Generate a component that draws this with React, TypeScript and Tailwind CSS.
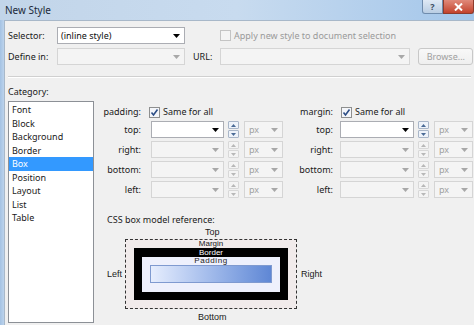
import React from 'react'

const categories = ['Font', 'Block', 'Background', 'Border', 'Box', 'Position', 'Layout', 'List', 'Table']
const sides = ['top', 'right', 'bottom', 'left']

function Arrow({ enabled }: { enabled: boolean }) {
  return (
    <svg width="7" height="4" viewBox="0 0 7 4" className="shrink-0">
      <path d="M0 0 L7 0 L3.5 4 Z" fill={enabled ? '#000' : '#a8a8a8'} />
    </svg>
  )
}

function Combo({ w, enabled, text }: { w: string; enabled: boolean; text?: string }) {
  return (
    <div
      className={`flex h-[17px] ${w} items-center justify-between border pl-[3px] pr-[4px] ${
        enabled ? 'border-[#abadb3] bg-white' : 'border-[#d5d5d5] bg-[#f4f4f4]'
      }`}
    >
      <span className="text-[#111]">{text}</span>
      <Arrow enabled={enabled} />
    </div>
  )
}

function Spinner({ enabled }: { enabled: boolean }) {
  const c = enabled ? 'border-[#a9b6c8] bg-[#eef3fa]' : 'border-[#d8d8d8] bg-[#f4f4f4]'
  const f = enabled ? '#4a6a96' : '#b8b8b8'
  return (
    <div className="flex h-[17px] w-[11px] flex-col gap-px">
      <div className={`flex flex-1 items-center justify-center rounded-[1px] border ${c}`}>
        <svg width="5" height="3" viewBox="0 0 5 3">
          <path d="M0 3 L5 3 L2.5 0 Z" fill={f} />
        </svg>
      </div>
      <div className={`flex flex-1 items-center justify-center rounded-[1px] border ${c}`}>
        <svg width="5" height="3" viewBox="0 0 5 3">
          <path d="M0 0 L5 0 L2.5 3 Z" fill={f} />
        </svg>
      </div>
    </div>
  )
}

function Units() {
  return (
    <div className="flex h-[17px] w-[39px] items-center justify-between border border-[#d5d5d5] bg-[#f4f4f4] pl-[4px] pr-[4px]">
      <span className="text-[#a0a0a0]">px</span>
      <Arrow enabled={false} />
    </div>
  )
}

function Check({ checked, disabled }: { checked?: boolean; disabled?: boolean }) {
  return (
    <div
      className={`flex h-[11px] w-[11px] items-center justify-center border ${
        disabled ? 'border-[#c4c4c4] bg-[#f4f4f4]' : 'border-[#8e8f8f] bg-[#f4f6fa]'
      }`}
    >
      {checked && (
        <svg width="9" height="9" viewBox="0 0 9 9">
          <path d="M1.5 4.5 L3.5 7 L7.5 1.5" stroke="#2d4e86" strokeWidth="1.6" fill="none" />
        </svg>
      )}
    </div>
  )
}

function Group({ label, labelW, comboMl }: { label: string; labelW: string; comboMl: string }) {
  return (
    <div className="flex flex-col">
      <div className="flex h-[12px] items-center">
        <span className={`${labelW} text-right`}>{label}</span>
        <div className="ml-[8px]">
          <Check checked />
        </div>
        <span className="ml-[3px]">Same for all</span>
      </div>
      <div className="mt-[3px] flex flex-col gap-[3px]">
        {sides.map((s, i) => (
          <div key={s} className="flex h-[17px] items-center">
            <span className={`${labelW} text-right`}>{s}:</span>
            <div className={comboMl}>
              <Combo w={label === 'padding:' ? 'w-[73px]' : 'w-[74px]'} enabled={i === 0} />
            </div>
            <div className="ml-[4px]">
              <Spinner enabled={i === 0} />
            </div>
            <div className="ml-[5px]">
              <Units />
            </div>
          </div>
        ))}
      </div>
    </div>
  )
}

function BoxModel() {
  return (
    <div className="flex flex-col font-['Liberation_Sans',Arial,sans-serif] text-[9px] leading-[9px] text-[#1a1a1a]">
      <div className="ml-[98px] h-[9px]">Top</div>
      <div className="mt-[2px] flex items-center">
        <span className="w-[18px]">Left</span>
        <div className="flex h-[70px] w-[172px] flex-col items-stretch border border-dashed border-[#333] bg-[#f1ebeb] px-[8px] pb-[8px] text-[8px] leading-[8px]">
          <div className="h-[8px] overflow-visible text-center">Margin</div>
          <div className="flex flex-1 flex-col bg-black px-[8px] pb-[8px]">
            <div className="h-[9px] pt-px text-center text-white">Border</div>
            <div className="flex flex-1 flex-col bg-[#eef0fc] px-[8px] pb-[9px]">
              <div className="h-[8px] text-center tracking-[0.6px]">Padding</div>
              <div className="flex-1 border border-[#7f9ad0] bg-gradient-to-r from-[#e6edfd] to-[#5f87d5]" />
            </div>
          </div>
        </div>
        <span className="ml-[4px]">Right</span>
      </div>
      <div className="ml-[91px] mt-[4px] h-[9px]">Bottom</div>
    </div>
  )
}

export default function App() {
  return (
    <div className="flex h-[325px] w-[474px] flex-col overflow-hidden font-['Noto_Sans',sans-serif] text-[9px] leading-[12px] text-[#1a1a1a]">
      {/* title bar */}
      <div className="flex h-[20px] shrink-0 items-start bg-gradient-to-r from-[#c2d5e9] via-[#c8dbef] to-[#a3c6ea]">
        <span className="ml-[5px] mt-[4px] text-[10px] leading-[13px] text-[#1c2a3a]">New Style</span>
        <div className="ml-auto flex">
          <div className="flex h-[14px] w-[21px] items-center justify-center rounded-bl-[3px] border border-t-0 border-[#6f8cad] bg-gradient-to-b from-[#dfe9f5] to-[#b9cde3] text-[9px] leading-[9px] font-bold text-[#3d4e63]">
            ?
          </div>
          <div className="flex h-[14px] w-[31px] items-center justify-center rounded-br-[3px] border border-t-0 border-[#8e3b2d] bg-gradient-to-b from-[#e0897a] to-[#c2412b]">
            <svg width="9" height="8" viewBox="0 0 9 8">
              <path d="M1 0.5 L8 7.5 M8 0.5 L1 7.5" stroke="#fff" strokeWidth="2" />
            </svg>
          </div>
        </div>
      </div>

      <div className="flex flex-1">
        <div className="w-[4px] bg-gradient-to-r from-[#a4c2e3] to-[#bcd3ec]" />
        <div className="flex flex-1 flex-col border-t border-l border-[#a8b8c9] bg-[#f0f0f0]">
          {/* selector row */}
          <div className="mt-[6px] flex items-center">
            <span className="w-[52px] pl-[3px]">Selector:</span>
            <Combo w="w-[128px]" enabled text="(inline style)" />
            <div className="ml-[35px]">
              <Check disabled />
            </div>
            <span className="ml-[3px] text-[#9a9a9a]">Apply new style to document selection</span>
          </div>
          {/* define in row */}
          <div className="mt-[4px] flex items-center">
            <span className="w-[52px] pl-[3px]">Define in:</span>
            <Combo w="w-[128px]" enabled={false} />
            <span className="ml-[8px]">URL:</span>
            <div className="ml-[8px]">
              <Combo w="w-[190px]" enabled={false} />
            </div>
            <div className="ml-[8px] flex h-[17px] w-[55px] items-center justify-center rounded-[3px] border border-[#c8c8c8] bg-gradient-to-b from-[#f8f8f8] to-[#efefef] text-[#a0a0a0]">
              Browse...
            </div>
          </div>
          {/* separator */}
          <div className="mx-[3px] mt-[11px] h-px bg-[#d0d0d0]" />
          <div className="mx-[3px] h-px bg-white" />

          <div className="flex flex-1">
            {/* category */}
            <div className="mb-[2px] ml-[3px] flex w-[86px] flex-col">
              <span className="mt-[8px]">Category:</span>
              <div className="mt-[3px] flex-1 border border-[#8c9096] bg-white pt-px">
                {categories.map((c) => (
                  <div
                    key={c}
                    className={`h-[13.5px] pl-[3px] leading-[13px] ${c === 'Box' ? 'bg-[#3399ff] text-white' : ''}`}
                  >
                    {c}
                  </div>
                ))}
              </div>
            </div>

            {/* right */}
            <div className="flex flex-col">
              <div className="mt-[28px] flex">
                <Group label="padding:" labelW="w-[47px]" comboMl="ml-[10px]" />
                <Group label="margin:" labelW="w-[50px]" comboMl="ml-[7px]" />
              </div>
              <span className="ml-[13px] mt-[16px]">CSS box model reference:</span>
              <div className="ml-[13px] mt-[2px]">
                <BoxModel />
              </div>
            </div>
          </div>
        </div>
      </div>
    </div>
  )
}
